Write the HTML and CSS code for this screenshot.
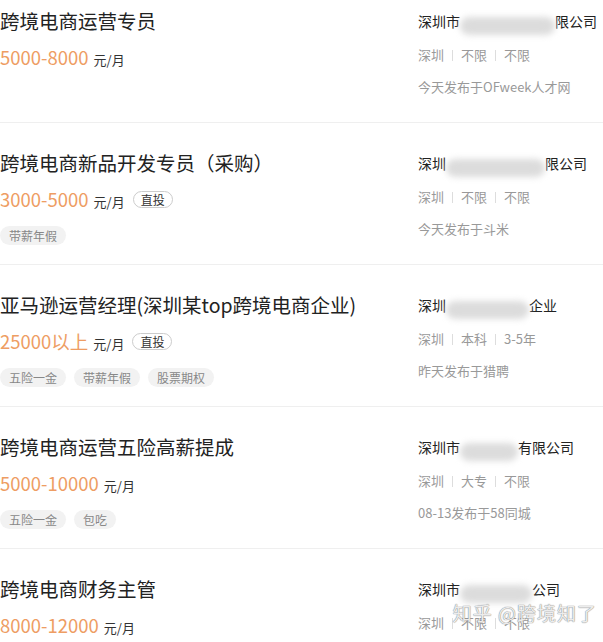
FILE: index.html
```
<!DOCTYPE html>
<html>
<head>
    <title>Job List</title>
    <link rel="stylesheet" href="styles.css">
</head>
<body>
    <div class="page">
        <div class="job-list">
            <div class="job">
                <div class="job-main">
                    <div class="job-title">跨境电商运营专员</div>
                    <div class="job-salary">
                        <span class="salary">5000-8000</span>
                        <span class="unit">元/月</span>
                    </div>
                </div>
                <div class="job-company">
                    <div class="company-name">深圳市<span class="smudge smudge-1"></span>限公司</div>
                    <div class="job-reqs"><span>深圳</span><i class="sep"></i><span>不限</span><i class="sep"></i><span>不限</span></div>
                    <div class="job-source">今天发布于OFweek人才网</div>
                </div>
            </div>

            <div class="job">
                <div class="job-main">
                    <div class="job-title">跨境电商新品开发专员（采购）</div>
                    <div class="job-salary">
                        <span class="salary">3000-5000</span>
                        <span class="unit">元/月</span>
                        <span class="direct">直投</span>
                    </div>
                    <div class="job-tags">
                        <span class="tag">带薪年假</span>
                    </div>
                </div>
                <div class="job-company">
                    <div class="company-name">深圳<span class="smudge smudge-2"></span>限公司</div>
                    <div class="job-reqs"><span>深圳</span><i class="sep"></i><span>不限</span><i class="sep"></i><span>不限</span></div>
                    <div class="job-source">今天发布于斗米</div>
                </div>
            </div>

            <div class="job">
                <div class="job-main">
                    <div class="job-title">亚马逊运营经理(深圳某top跨境电商企业)</div>
                    <div class="job-salary">
                        <span class="salary">25000以上</span>
                        <span class="unit">元/月</span>
                        <span class="direct">直投</span>
                    </div>
                    <div class="job-tags">
                        <span class="tag">五险一金</span>
                        <span class="tag">带薪年假</span>
                        <span class="tag">股票期权</span>
                    </div>
                </div>
                <div class="job-company">
                    <div class="company-name">深圳<span class="smudge smudge-3"></span>企业</div>
                    <div class="job-reqs"><span>深圳</span><i class="sep"></i><span>本科</span><i class="sep"></i><span>3-5年</span></div>
                    <div class="job-source">昨天发布于猎聘</div>
                </div>
            </div>

            <div class="job">
                <div class="job-main">
                    <div class="job-title">跨境电商运营五险高薪提成</div>
                    <div class="job-salary">
                        <span class="salary">5000-10000</span>
                        <span class="unit">元/月</span>
                    </div>
                    <div class="job-tags">
                        <span class="tag">五险一金</span>
                        <span class="tag">包吃</span>
                    </div>
                </div>
                <div class="job-company">
                    <div class="company-name">深圳市<span class="smudge smudge-4"></span>有限公司</div>
                    <div class="job-reqs"><span>深圳</span><i class="sep"></i><span>大专</span><i class="sep"></i><span>不限</span></div>
                    <div class="job-source">08-13发布于58同城</div>
                </div>
            </div>

            <div class="job">
                <div class="job-main">
                    <div class="job-title">跨境电商财务主管</div>
                    <div class="job-salary">
                        <span class="salary">8000-12000</span>
                        <span class="unit">元/月</span>
                    </div>
                </div>
                <div class="job-company">
                    <div class="company-name">深圳市<span class="smudge smudge-5"></span>公司</div>
                    <div class="job-reqs"><span>深圳</span><i class="sep"></i><span>不限</span><i class="sep"></i><span>不限</span></div>
                </div>
            </div>
        </div>

        <div class="watermark">知乎 @跨境知了</div>
    </div>
</body>
</html>
```

FILE: styles.css
```
body {
    font-family: "Noto Sans CJK SC", "Noto Sans", sans-serif;
    background-color: #fff;
    color: #222;
    margin: 0;
    padding: 0;
}

.page {
    position: relative;
    width: 603px;
    height: 642px;
    overflow: hidden;
}

.job-list {
    margin-top: -19px;
}

.job {
    display: flex;
    height: 142px;
    box-sizing: border-box;
    padding-top: 28px;
    border-bottom: 1px solid #efefef;
}

.job-main {
    flex: 1;
    min-width: 0;
}

.job-title {
    font-size: 19.5px;
    line-height: 24px;
    color: #222;
    white-space: nowrap;
}

.job-salary {
    display: flex;
    align-items: baseline;
    height: 24px;
    margin-top: 12px;
}

.salary {
    font-size: 18.5px;
    line-height: 24px;
    color: #ee9d63;
}

.unit {
    font-size: 13px;
    color: #333;
    margin-left: 5px;
}

.direct {
    align-self: center;
    margin-left: 8px;
    padding: 0 7px;
    height: 15px;
    line-height: 15px;
    font-size: 12px;
    color: #333;
    border: 1px solid #ccc;
    border-radius: 9px;
}

.job-tags {
    display: flex;
    gap: 8px;
    margin-top: 15px;
}

.tag {
    height: 19px;
    line-height: 19px;
    padding: 0 9px;
    font-size: 12px;
    color: #888;
    background-color: #f2f2f2;
    border-radius: 10px;
}

.job-company {
    width: 185px;
    flex-shrink: 0;
    font-size: 13px;
}

.company-name {
    font-size: 14px;
    line-height: 24px;
    color: #222;
    white-space: nowrap;
}

.smudge {
    display: inline-block;
    height: 18px;
    vertical-align: -8px;
    background-color: #dcdcdc;
    border-radius: 9px;
    filter: blur(3px);
}

.smudge-1 {
    width: 95px;
}

.smudge-2 {
    width: 99px;
}

.smudge-3 {
    width: 83px;
}

.smudge-4 {
    width: 58px;
}

.smudge-5 {
    width: 72px;
}

.job-reqs {
    display: flex;
    align-items: center;
    margin-top: 8px;
    line-height: 24px;
    color: #999;
}

.sep {
    display: inline-block;
    width: 1px;
    height: 11px;
    margin: 0 8px;
    background-color: #ddd;
}

.job-source {
    margin-top: 8px;
    line-height: 24px;
    color: #999;
}

.watermark {
    position: absolute;
    right: 6px;
    bottom: 16px;
    font-size: 19px;
    color: rgba(255, 255, 255, 0.85);
    text-shadow: 0 0 1px #888, 0 0 1px #888;
    letter-spacing: 1px;
}
```
